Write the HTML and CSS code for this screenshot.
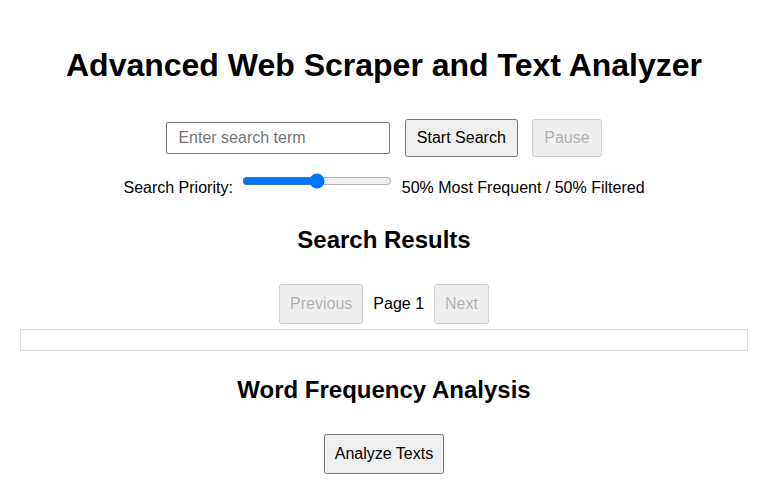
FILE: index.html
```html
<!DOCTYPE html>
<html lang="en">
<head>
    <meta charset="UTF-8">
    <meta name="viewport" content="width=device-width, initial-scale=1.0">
    <title>Advanced Web Scraper and Text Analyzer</title>
    <link rel="stylesheet" href="styles.css">
</head>
<body>

    <h1>Advanced Web Scraper and Text Analyzer</h1>

    <!-- Search Controls -->
    <div class="search-controls">
        <input type="text" id="search-term" class="search-input" placeholder="Enter search term">
        <button id="start-btn">Start Search</button>
        <button id="pause-btn" disabled>Pause</button>
    </div>

    <div class="priority-row">
        <label for="priority">Search Priority:</label>
        <input type="range" id="priority" class="priority-slider" min="0" max="100" value="50">
        <span id="priority-text">50% Most Frequent / 50% Filtered</span>
    </div>

    <!-- Results -->
    <h2>Search Results</h2>
    <div class="pagination">
        <button id="prev-btn" disabled>Previous</button>
        <span id="page-info">Page 1</span>
        <button id="next-btn" disabled>Next</button>
    </div>
    <div class="results" id="results"></div>

    <!-- Word Frequency -->
    <h2>Word Frequency Analysis</h2>
    <div class="analysis-controls">
        <button id="analyze-btn">Analyze Texts</button>
    </div>

</body>
</html>
```

FILE: styles.css
```css
body {
    font-family: 'Liberation Sans', Arial, sans-serif;
    margin: 0;
    padding: 20px;
    color: #000;
}

h1 {
    font-size: 32px;
    text-align: center;
    margin: 27px 0 35px;
}

h2 {
    font-size: 24px;
    text-align: center;
    margin: 25px 0 30px;
}

button {
    font-family: 'Liberation Sans', Arial, sans-serif;
    font-size: 16px;
    padding: 8px 10px;
    margin: 0 5px;
}

.search-controls {
    text-align: center;
    margin-bottom: 16px;
}

.search-input {
    font-family: 'Liberation Sans', Arial, sans-serif;
    font-size: 16px;
    width: 200px;
    padding: 6px 11px;
    margin: 0 5px;
    border: 1px solid #767676;
    border-radius: 2px;
}

.priority-row {
    text-align: center;
    font-size: 16px;
    margin-bottom: 29px;
}

.priority-slider {
    width: 150px;
    margin: 0 5px;
    vertical-align: 4px;
}

.priority-row + h2 {
    margin-top: 0;
}

.pagination {
    display: flex;
    justify-content: center;
    align-items: center;
    gap: 10px;
    margin-bottom: 5px;
}

.pagination button {
    padding: 9px;
    margin: 0;
}

.results {
    border: 1px solid #ddd;
    padding: 10px;
}

.analysis-controls {
    text-align: center;
}

.analysis-controls button {
    padding: 9px;
}
```
